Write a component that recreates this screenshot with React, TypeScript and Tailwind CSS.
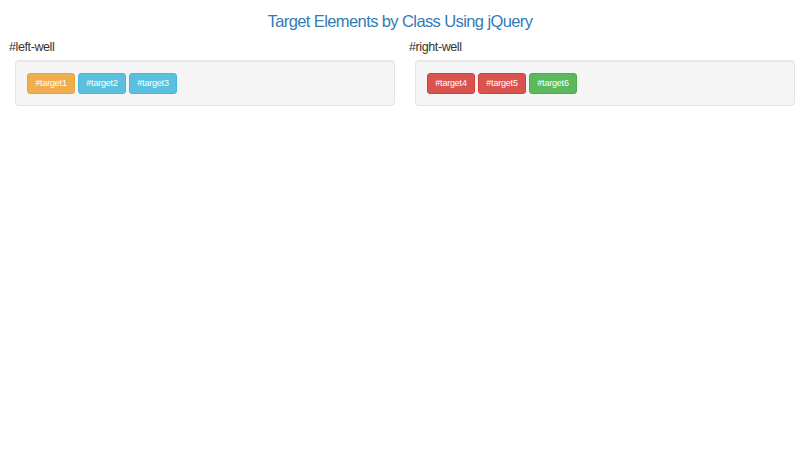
import React from 'react';

const font = { fontFamily: '"Liberation Sans", Arial, Helvetica, sans-serif' };

interface WellProps {
  id: string;
  targets: { label: string; className: string }[];
}

function Well({ id, targets }: WellProps) {
  return (
    <div className="flex flex-col">
      <h4 className="text-[12.5px] tracking-[-0.4px] leading-[16px] text-[#333] mt-[39px] mb-[5px]">#{id}</h4>
      <div className="ml-[6px] w-[380px] h-[46px] bg-[#f5f5f5] border border-[#e3e3e3] rounded-[4px] shadow-[inset_0_1px_1px_rgba(0,0,0,0.05)] pl-[11px] pt-[12px] flex gap-[3px] items-start">
        {targets.map((t) => (
          <button
            key={t.label}
            className={`h-[21px] w-[48px] rounded-[3px] text-white text-[9px] tracking-[-0.2px] leading-none ${t.className}`}
          >
            {t.label}
          </button>
        ))}
      </div>
    </div>
  );
}

export default function App() {
  return (
    <div className="w-[800px] h-[450px] bg-white relative" style={font}>
      <h3 className="absolute left-0 right-0 top-[11px] text-center text-[16.5px] tracking-[-0.6px] leading-[20px] text-[#337ab7]">
        Target Elements by Class Using jQuery
      </h3>
      <div className="grid grid-cols-[400px_391px] pl-[9px]">
        <Well
          id="left-well"
          targets={[
            { label: '#target1', className: 'bg-[#f0ad4e] border border-[#eea236]' },
            { label: '#target2', className: 'bg-[#5bc0de] border border-[#46b8da]' },
            { label: '#target3', className: 'bg-[#5bc0de] border border-[#46b8da]' },
          ]}
        />
        <Well
          id="right-well"
          targets={[
            { label: '#target4', className: 'bg-[#d9534f] border border-[#d43f3a]' },
            { label: '#target5', className: 'bg-[#d9534f] border border-[#d43f3a]' },
            { label: '#target6', className: 'bg-[#5cb85c] border border-[#4cae4c]' },
          ]}
        />
      </div>
    </div>
  );
}
